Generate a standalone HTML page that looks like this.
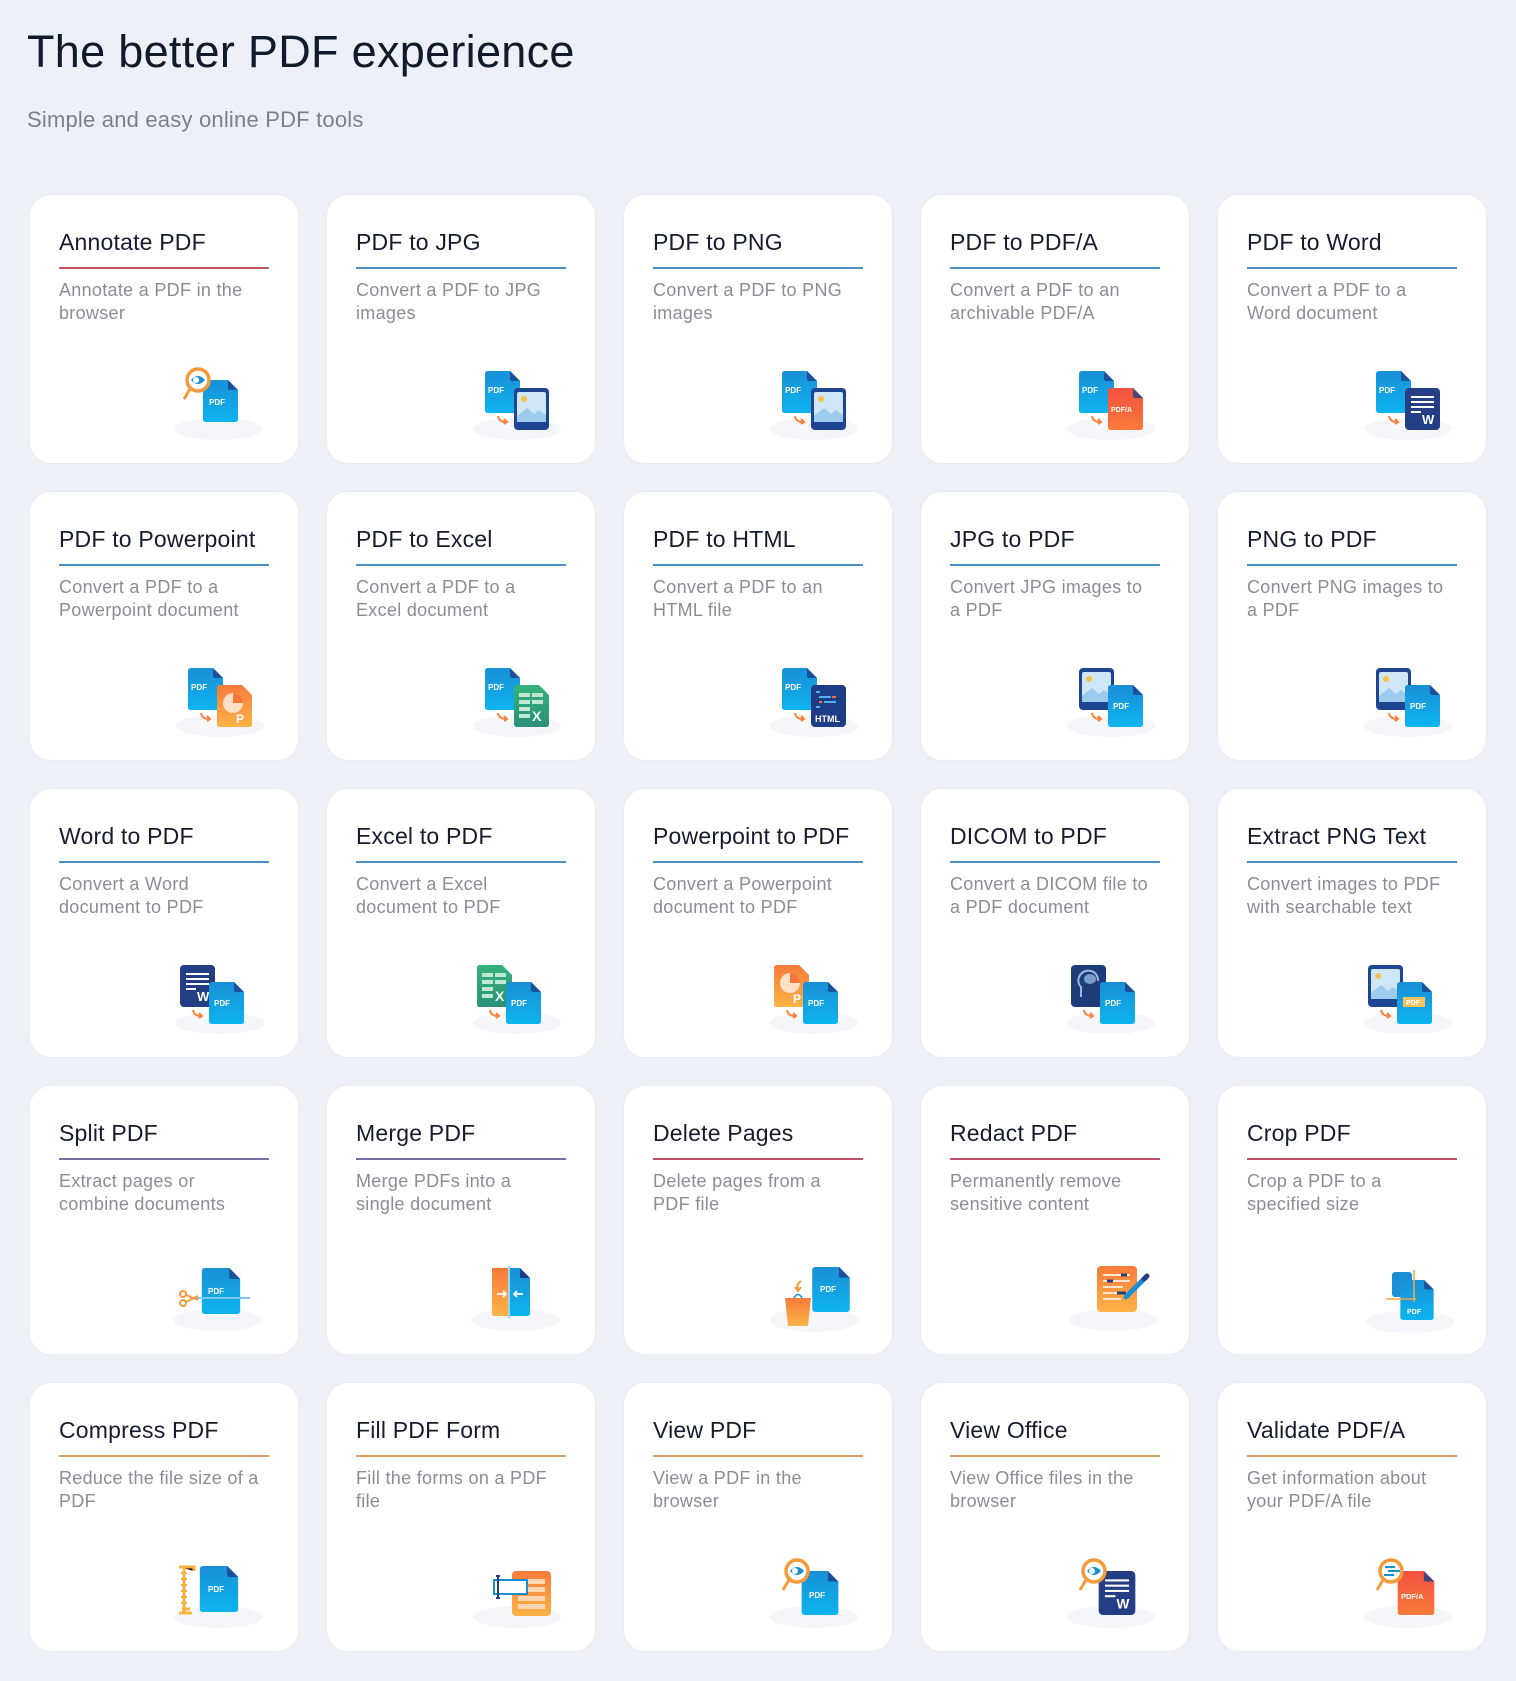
<!DOCTYPE html>
<html><head><meta charset="utf-8"><style>
*{margin:0;padding:0;box-sizing:border-box}
body{width:1516px;height:1681px;background:#edf1f7;font-family:"Liberation Sans",sans-serif;position:relative;overflow:hidden}
h1{position:absolute;left:27px;top:26px;font-size:45px;font-weight:400;color:#111a2b;letter-spacing:0.3px}
.sub{position:absolute;left:27px;top:107px;font-size:22px;color:#7b7f87;letter-spacing:0.2px}
.c{position:absolute;width:270px;height:270px;background:#fff;border-radius:22px;border:1px solid #e7ecf3}
.c h3{position:absolute;left:29px;top:33px;font-size:23px;line-height:28px;font-weight:400;color:#161c2d;white-space:nowrap;letter-spacing:0.2px}
.c hr{position:absolute;left:29px;top:72px;width:210px;border:0;height:2px;background:#4a90c2}
.c p{position:absolute;left:29px;top:84px;width:205px;font-size:18px;line-height:23px;color:#8a8d93;letter-spacing:0.3px}
.c svg{position:absolute;left:130px;top:160px;width:110px;height:90px}
.red hr{background:#c45a5a}.pur hr{background:#7a6aa8}.rd hr{background:#c0506a}.tan hr{background:#d9a066}
.c svg ellipse{fill:#f4f6fa}
</style></head><body>
<svg width="0" height="0" style="position:absolute">
<defs>
<linearGradient id="gb" x1="0" y1="0" x2="0" y2="1"><stop offset="0" stop-color="#1a8fd6"/><stop offset="1" stop-color="#0db4ef"/></linearGradient>
<linearGradient id="go" x1="0" y1="0" x2="0" y2="1"><stop offset="0" stop-color="#f77b3a"/><stop offset="1" stop-color="#fdb347"/></linearGradient>
<linearGradient id="gr" x1="0" y1="0" x2="0" y2="1"><stop offset="0" stop-color="#f2503f"/><stop offset="1" stop-color="#fb7a3a"/></linearGradient>
<linearGradient id="gg" x1="0" y1="0" x2="0" y2="1"><stop offset="0" stop-color="#35b37a"/><stop offset="1" stop-color="#2c8f78"/></linearGradient>
<symbol id="d" viewBox="0 0 35 42"><path d="M3 0H25L35 10V39Q35 42 32 42H3Q0 42 0 39V3Q0 0 3 0Z"/><path d="M25 0L35 10H27Q25 10 25 8Z" fill="#1d3f8a" opacity=".8"/></symbol>
<symbol id="img" viewBox="0 0 35 42"><rect width="35" height="42" rx="4" fill="#1e4591"/><rect x="3" y="4" width="29" height="30" rx="2" fill="#cfe6f7"/><path d="M3 28L13 20L20 26L25 22L32 27V34H3Z" fill="#9ccbee"/><circle cx="10" cy="11" r="3" fill="#f8c14a"/></symbol>
<symbol id="wd" viewBox="0 0 35 42"><rect width="35" height="42" rx="4" fill="#233e85"/><g stroke="#fff" stroke-width="2"><path d="M6 9H29M6 14H29M6 19H29M6 24H16"/></g><text x="17" y="36" font-size="13" font-weight="bold" fill="#fff" font-family="Liberation Sans">W</text></symbol>
<symbol id="xl" viewBox="0 0 35 42"><path d="M3 0H25L35 10V39Q35 42 32 42H3Q0 42 0 39V3Q0 0 3 0Z" fill="url(#gg)"/><g fill="#bfe8d4"><rect x="5" y="8" width="11" height="4"/><rect x="18" y="8" width="11" height="4"/><rect x="5" y="15" width="11" height="4"/><rect x="18" y="15" width="11" height="4"/><rect x="5" y="22" width="11" height="4"/><rect x="5" y="29" width="11" height="4"/></g><text x="18" y="36" font-size="14" font-weight="bold" fill="#e8fff4" font-family="Liberation Sans">X</text></symbol>
<symbol id="pp" viewBox="0 0 35 42"><path d="M3 0H25L35 10V39Q35 42 32 42H3Q0 42 0 39V3Q0 0 3 0Z" fill="url(#go)"/><circle cx="16" cy="18" r="10" fill="#ffe0c7"/><path d="M16 18V8A10 10 0 0 1 26 18Z" fill="#f7763a"/><text x="19" y="38" font-size="12" font-weight="bold" fill="#fff" font-family="Liberation Sans">P</text></symbol>
<symbol id="ht" viewBox="0 0 35 42"><rect width="35" height="42" rx="4" fill="#1f3c86"/><g stroke-width="2"><path d="M5 7H9M8 12H20M13 17H25M5 22H9" stroke="#4fb3f0"/><path d="M21 12H25M8 17H11" stroke="#f36b4b"/></g><text x="4" y="37" font-size="9" font-weight="bold" fill="#fff" font-family="Liberation Sans">HTML</text></symbol>
<symbol id="ar" viewBox="0 0 12 10"><path d="M1 1Q2 7 9 7M7 4L10 7L7 9" fill="none" stroke="#f7823a" stroke-width="2"/></symbol>
<symbol id="mg" viewBox="0 0 30 36"><circle cx="16" cy="13" r="11" fill="#fff" stroke="#f59a3b" stroke-width="3.5"/><path d="M8 22L2 32" stroke="#f59a3b" stroke-width="3"/></symbol>
</defs></svg>

<h1>The better PDF experience</h1>
<div class="sub">Simple and easy online PDF tools</div>

<div class="c red" style="left:29px;top:194px"><h3>Annotate PDF</h3><hr><p>Annotate a PDF in the browser</p>
<svg viewBox="0 0 110 90"><ellipse cx="58" cy="74" rx="44" ry="11"/><use href="#d" x="43" y="25" width="35" height="42" fill="url(#gb)"/><text x="49" y="50" font-size="8" font-weight="bold" fill="#fff" font-family="Liberation Sans">PDF</text><use href="#mg" x="22" y="12" width="30" height="36"/><path d="M31 25Q38 17 45 25Q38 33 31 25Z" fill="#1a8fd6"/><circle cx="36" cy="25" r="3" fill="#fff"/></svg></div>

<div class="c" style="left:326px;top:194px"><h3>PDF to JPG</h3><hr><p>Convert a PDF to JPG images</p>
<svg viewBox="0 0 110 90"><ellipse cx="60" cy="74" rx="44" ry="11"/><use href="#d" x="28" y="16" width="35" height="42" fill="url(#gb)"/><text x="31" y="38" font-size="8" font-weight="bold" fill="#fff" font-family="Liberation Sans">PDF</text><use href="#img" x="57" y="33" width="35" height="42"/><use href="#ar" x="40" y="60" width="12" height="10"/></svg></div>

<div class="c" style="left:623px;top:194px"><h3>PDF to PNG</h3><hr><p>Convert a PDF to PNG images</p>
<svg viewBox="0 0 110 90"><ellipse cx="60" cy="74" rx="44" ry="11"/><use href="#d" x="28" y="16" width="35" height="42" fill="url(#gb)"/><text x="31" y="38" font-size="8" font-weight="bold" fill="#fff" font-family="Liberation Sans">PDF</text><use href="#img" x="57" y="33" width="35" height="42"/><use href="#ar" x="40" y="60" width="12" height="10"/></svg></div>

<div class="c" style="left:920px;top:194px"><h3>PDF to PDF/A</h3><hr><p>Convert a PDF to an archivable PDF/A</p>
<svg viewBox="0 0 110 90"><ellipse cx="60" cy="74" rx="44" ry="11"/><use href="#d" x="28" y="16" width="35" height="42" fill="url(#gb)"/><text x="31" y="38" font-size="8" font-weight="bold" fill="#fff" font-family="Liberation Sans">PDF</text><use href="#d" x="57" y="33" width="35" height="42" fill="url(#gr)"/><text x="60" y="57" font-size="7" font-weight="bold" fill="#fff" font-family="Liberation Sans">PDF/A</text><use href="#ar" x="40" y="60" width="12" height="10"/></svg></div>

<div class="c" style="left:1217px;top:194px"><h3>PDF to Word</h3><hr><p>Convert a PDF to a Word document</p>
<svg viewBox="0 0 110 90"><ellipse cx="60" cy="74" rx="44" ry="11"/><use href="#d" x="28" y="16" width="35" height="42" fill="url(#gb)"/><text x="31" y="38" font-size="8" font-weight="bold" fill="#fff" font-family="Liberation Sans">PDF</text><use href="#wd" x="57" y="33" width="35" height="42"/><use href="#ar" x="40" y="60" width="12" height="10"/></svg></div>

<div class="c" style="left:29px;top:491px"><h3>PDF to Powerpoint</h3><hr><p>Convert a PDF to a Powerpoint document</p>
<svg viewBox="0 0 110 90"><ellipse cx="60" cy="74" rx="44" ry="11"/><use href="#d" x="28" y="16" width="35" height="42" fill="url(#gb)"/><text x="31" y="38" font-size="8" font-weight="bold" fill="#fff" font-family="Liberation Sans">PDF</text><use href="#pp" x="57" y="33" width="35" height="42"/><use href="#ar" x="40" y="60" width="12" height="10"/></svg></div>

<div class="c" style="left:326px;top:491px"><h3>PDF to Excel</h3><hr><p>Convert a PDF to a Excel document</p>
<svg viewBox="0 0 110 90"><ellipse cx="60" cy="74" rx="44" ry="11"/><use href="#d" x="28" y="16" width="35" height="42" fill="url(#gb)"/><text x="31" y="38" font-size="8" font-weight="bold" fill="#fff" font-family="Liberation Sans">PDF</text><use href="#xl" x="57" y="33" width="35" height="42"/><use href="#ar" x="40" y="60" width="12" height="10"/></svg></div>

<div class="c" style="left:623px;top:491px"><h3>PDF to HTML</h3><hr><p>Convert a PDF to an HTML file</p>
<svg viewBox="0 0 110 90"><ellipse cx="60" cy="74" rx="44" ry="11"/><use href="#d" x="28" y="16" width="35" height="42" fill="url(#gb)"/><text x="31" y="38" font-size="8" font-weight="bold" fill="#fff" font-family="Liberation Sans">PDF</text><use href="#ht" x="57" y="33" width="35" height="42"/><use href="#ar" x="40" y="60" width="12" height="10"/></svg></div>

<div class="c" style="left:920px;top:491px"><h3>JPG to PDF</h3><hr><p>Convert JPG images to a PDF</p>
<svg viewBox="0 0 110 90"><ellipse cx="60" cy="74" rx="44" ry="11"/><use href="#img" x="28" y="16" width="35" height="42"/><use href="#d" x="57" y="33" width="35" height="42" fill="url(#gb)"/><text x="62" y="57" font-size="8" font-weight="bold" fill="#fff" font-family="Liberation Sans">PDF</text><use href="#ar" x="40" y="60" width="12" height="10"/></svg></div>

<div class="c" style="left:1217px;top:491px"><h3>PNG to PDF</h3><hr><p>Convert PNG images to a PDF</p>
<svg viewBox="0 0 110 90"><ellipse cx="60" cy="74" rx="44" ry="11"/><use href="#img" x="28" y="16" width="35" height="42"/><use href="#d" x="57" y="33" width="35" height="42" fill="url(#gb)"/><text x="62" y="57" font-size="8" font-weight="bold" fill="#fff" font-family="Liberation Sans">PDF</text><use href="#ar" x="40" y="60" width="12" height="10"/></svg></div>

<div class="c" style="left:29px;top:788px"><h3>Word to PDF</h3><hr><p>Convert a Word document to PDF</p>
<svg viewBox="0 0 110 90"><ellipse cx="60" cy="74" rx="44" ry="11"/><use href="#wd" x="20" y="16" width="35" height="42"/><use href="#d" x="49" y="33" width="35" height="42" fill="url(#gb)"/><text x="54" y="57" font-size="8" font-weight="bold" fill="#fff" font-family="Liberation Sans">PDF</text><use href="#ar" x="32" y="60" width="12" height="10"/></svg></div>

<div class="c" style="left:326px;top:788px"><h3>Excel to PDF</h3><hr><p>Convert a Excel document to PDF</p>
<svg viewBox="0 0 110 90"><ellipse cx="60" cy="74" rx="44" ry="11"/><use href="#xl" x="20" y="16" width="35" height="42"/><use href="#d" x="49" y="33" width="35" height="42" fill="url(#gb)"/><text x="54" y="57" font-size="8" font-weight="bold" fill="#fff" font-family="Liberation Sans">PDF</text><use href="#ar" x="32" y="60" width="12" height="10"/></svg></div>

<div class="c" style="left:623px;top:788px"><h3>Powerpoint to PDF</h3><hr><p>Convert a Powerpoint document to PDF</p>
<svg viewBox="0 0 110 90"><ellipse cx="60" cy="74" rx="44" ry="11"/><use href="#pp" x="20" y="16" width="35" height="42"/><use href="#d" x="49" y="33" width="35" height="42" fill="url(#gb)"/><text x="54" y="57" font-size="8" font-weight="bold" fill="#fff" font-family="Liberation Sans">PDF</text><use href="#ar" x="32" y="60" width="12" height="10"/></svg></div>

<div class="c" style="left:920px;top:788px"><h3>DICOM to PDF</h3><hr><p>Convert a DICOM file to a PDF document</p>
<svg viewBox="0 0 110 90"><ellipse cx="60" cy="74" rx="44" ry="11"/><rect x="20" y="16" width="35" height="42" rx="4" fill="#1f3c7a"/><path d="M30 48V38Q26 34 28 28Q32 20 40 22Q47 24 47 32" fill="none" stroke="#9bb8da" stroke-width="2"/><ellipse cx="39" cy="30" rx="6" ry="5" style="fill:#7aa0cf"/><use href="#d" x="49" y="33" width="35" height="42" fill="url(#gb)"/><text x="54" y="57" font-size="8" font-weight="bold" fill="#fff" font-family="Liberation Sans">PDF</text><use href="#ar" x="32" y="60" width="12" height="10"/></svg></div>

<div class="c" style="left:1217px;top:788px"><h3>Extract PNG Text</h3><hr><p>Convert images to PDF with searchable text</p>
<svg viewBox="0 0 110 90"><ellipse cx="60" cy="74" rx="44" ry="11"/><use href="#img" x="20" y="16" width="35" height="42"/><use href="#d" x="49" y="33" width="35" height="42" fill="url(#gb)"/><rect x="55" y="48" width="22" height="10" fill="#f9c35a"/><text x="58" y="56" font-size="7" font-weight="bold" fill="#fff" font-family="Liberation Sans">PDF</text><use href="#ar" x="32" y="60" width="12" height="10"/></svg></div>

<div class="c pur" style="left:29px;top:1085px"><h3>Split PDF</h3><hr><p>Extract pages or combine documents</p>
<svg viewBox="0 0 110 90"><ellipse cx="58" cy="74" rx="44" ry="11"/><use href="#d" x="40" y="22" width="42" height="46" fill="url(#gb)"/><text x="48" y="48" font-size="8" font-weight="bold" fill="#fff" font-family="Liberation Sans">PDF</text><path d="M30 52H90" stroke="#7fc7ef" stroke-width="2"/><circle cx="23" cy="48" r="3" fill="none" stroke="#f59a3b" stroke-width="2"/><circle cx="23" cy="57" r="3" fill="none" stroke="#f59a3b" stroke-width="2"/><path d="M26 49L38 54M26 56L38 50" stroke="#f59a3b" stroke-width="2"/></svg></div>

<div class="c pur" style="left:326px;top:1085px"><h3>Merge PDF</h3><hr><p>Merge PDFs into a single document</p>
<svg viewBox="0 0 110 90"><ellipse cx="58" cy="74" rx="44" ry="11"/><path d="M35 22H51V70H38Q35 70 35 67Z" fill="url(#go)"/><path d="M53 22H63L73 32V67Q73 70 70 70H53Z" fill="url(#gb)"/><path d="M63 22L73 32H63Z" fill="#1d3f8a"/><path d="M52 20V72" stroke="#9cd5f5" stroke-width="2"/><path d="M40 48H49M46 45L49 48L46 51M66 48H57M60 45L57 48L60 51" stroke="#fff" stroke-width="1.8" fill="none"/></svg></div>

<div class="c rd" style="left:623px;top:1085px"><h3>Delete Pages</h3><hr><p>Delete pages from a PDF file</p>
<svg viewBox="0 0 110 90"><ellipse cx="60" cy="74" rx="44" ry="12"/><use href="#d" x="57" y="21" width="40" height="45" fill="url(#gb)"/><text x="66" y="46" font-size="8" font-weight="bold" fill="#fff" font-family="Liberation Sans">PDF</text><path d="M31 52H57L54 80H34Z" fill="url(#go)"/><path d="M40 52Q44 45 48 52" fill="none" stroke="#1a8fd6" stroke-width="1.5"/><path d="M47 35Q42 38 44 44M41 41L44 45L47 41" fill="none" stroke="#f59a3b" stroke-width="2"/></svg></div>

<div class="c rd" style="left:920px;top:1085px"><h3>Redact PDF</h3><hr><p>Permanently remove sensitive content</p>
<svg viewBox="0 0 110 90"><ellipse cx="62" cy="74" rx="44" ry="11"/><rect x="46" y="20" width="40" height="46" rx="4" fill="url(#go)"/><g stroke="#ffe6cc" stroke-width="2"><path d="M52 29H79M52 35H79M52 41H72M52 47H79M52 53H70"/></g><g stroke="#283c7a" stroke-width="3"><path d="M70 29H76M56 35H62M66 47H75"/></g><path d="M75 51L95 31" stroke="#1a8fd6" stroke-width="5" stroke-linecap="round"/><path d="M93 33L96 30" stroke="#233e85" stroke-width="5" stroke-linecap="round"/></svg></div>

<div class="c rd" style="left:1217px;top:1085px"><h3>Crop PDF</h3><hr><p>Crop a PDF to a specified size</p>
<svg viewBox="0 0 110 90"><ellipse cx="62" cy="76" rx="44" ry="11"/><rect x="44" y="26" width="20" height="25" rx="3" fill="#1a8fd6"/><use href="#d" x="52" y="34" width="34" height="40" fill="url(#gb)"/><text x="59" y="68" font-size="7" font-weight="bold" fill="#fff" font-family="Liberation Sans">PDF</text><path d="M66 24V56M38 53H68" stroke="#f7a64a" stroke-width="1.5"/></svg></div>

<div class="c tan" style="left:29px;top:1382px"><h3>Compress PDF</h3><hr><p>Reduce the file size of a PDF</p>
<svg viewBox="0 0 110 90"><ellipse cx="58" cy="74" rx="44" ry="11"/><use href="#d" x="39" y="23" width="40" height="46" fill="url(#gb)"/><text x="48" y="49" font-size="8" font-weight="bold" fill="#fff" font-family="Liberation Sans">PDF</text><g stroke="#f7b23a" stroke-width="3"><path d="M24 24V70M19 24H34V28M19 70H32M22 66H30"/></g><path d="M21 30H27M21 36H27M21 42H27M21 48H27M21 54H27M21 60H27" stroke="#f7b23a" stroke-width="2"/></svg></div>

<div class="c tan" style="left:326px;top:1382px"><h3>Fill PDF Form</h3><hr><p>Fill the forms on a PDF file</p>
<svg viewBox="0 0 110 90"><ellipse cx="60" cy="74" rx="44" ry="11"/><rect x="55" y="28" width="39" height="45" rx="4" fill="url(#go)"/><g fill="#ffd6b3"><rect x="71" y="36" width="17" height="5"/><rect x="71" y="44" width="17" height="5"/><rect x="61" y="53" width="27" height="5"/><rect x="61" y="61" width="27" height="5"/></g><rect x="37" y="37" width="33" height="14" fill="#fff" stroke="#1a8fd6" stroke-width="2"/><path d="M41 33V55M39 33H43M39 55H43" stroke="#233e85" stroke-width="2"/></svg></div>

<div class="c tan" style="left:623px;top:1382px"><h3>View PDF</h3><hr><p>View a PDF in the browser</p>
<svg viewBox="0 0 110 90"><ellipse cx="60" cy="74" rx="44" ry="11"/><use href="#d" x="47" y="28" width="38" height="44" fill="url(#gb)"/><text x="55" y="55" font-size="8" font-weight="bold" fill="#fff" font-family="Liberation Sans">PDF</text><use href="#mg" x="27" y="15" width="30" height="36"/><path d="M36 28Q43 20 50 28Q43 36 36 28Z" fill="#1a8fd6"/><circle cx="41" cy="28" r="3" fill="#fff"/></svg></div>

<div class="c tan" style="left:920px;top:1382px"><h3>View Office</h3><hr><p>View Office files in the browser</p>
<svg viewBox="0 0 110 90"><ellipse cx="60" cy="74" rx="44" ry="11"/><use href="#wd" x="47" y="28" width="38" height="44"/><use href="#mg" x="27" y="15" width="30" height="36"/><path d="M36 28Q43 20 50 28Q43 36 36 28Z" fill="#1a8fd6"/><circle cx="41" cy="28" r="3" fill="#fff"/></svg></div>

<div class="c tan" style="left:1217px;top:1382px"><h3>Validate PDF/A</h3><hr><p>Get information about your PDF/A file</p>
<svg viewBox="0 0 110 90"><ellipse cx="60" cy="74" rx="44" ry="11"/><use href="#d" x="49" y="28" width="38" height="44" fill="url(#gr)"/><text x="53" y="56" font-size="7.5" font-weight="bold" fill="#fff" font-family="Liberation Sans">PDF/A</text><use href="#mg" x="27" y="15" width="30" height="36"/><path d="M37 24H47M40 28H52M36 32H46" stroke="#1a8fd6" stroke-width="2"/></svg></div>

</body></html>
